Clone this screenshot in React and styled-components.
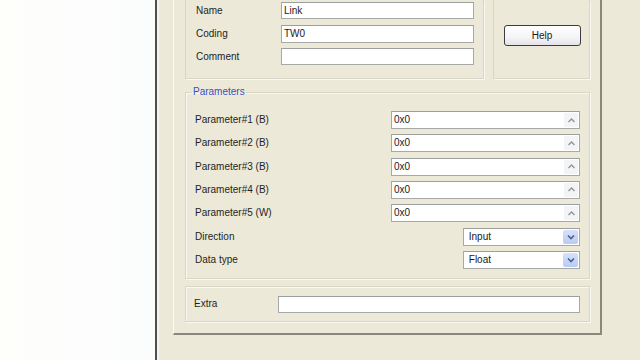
import React from "react";
import styled, { createGlobalStyle } from "styled-components";

const Global = createGlobalStyle`
  html, body { margin: 0; padding: 0; background: #fdfefb; }
  body { font-family: "Liberation Sans", Arial, sans-serif; font-size: 10px; color: #1e1e1e; }
  #root { width: 640px; height: 360px; overflow: hidden; }
`;

const Screen = styled.div`
  display: flex;
  width: 640px;
  height: 360px;
`;

const Desktop = styled.div`
  width: 155px;
  flex: none;
  background: linear-gradient(90deg, #fefefb 0%, #fbfdfd 100%);
`;

const Window = styled.div`
  flex: 1;
  background: #ece9d8;
  border-left: 2px solid #4e4e4e;
  box-shadow: inset 2px 0 0 #f4f3ee;
  padding-left: 16px;
  display: flex;
  align-items: flex-start;
`;

const Panel = styled.div`
  width: 429px;
  height: 335px;
  box-sizing: border-box;
  border-left: 1px solid #fbfaf4;
  border-right: 2px solid #8a877c;
  border-bottom: 2px solid #8a877c;
  padding: 0 10px 0 11px;
  display: flex;
  flex-direction: column;
`;

const TopRow = styled.div`
  display: flex;
  gap: 9px;
  height: 79px;
  flex: none;
`;

const Box = styled.div`
  box-sizing: border-box;
  width: ${(p) => p.$w}px;
  border: 1px solid #d9d5c7;
  border-top: none;
  box-shadow: 1px 1px 0 #f9f8f2;
  padding: ${(p) => p.$pad || "0"};
  display: flex;
  flex-direction: column;
  gap: ${(p) => p.$gap || 0}px;
`;

const Field = styled.div`
  display: grid;
  grid-template-columns: ${(p) => p.$label}px 1fr;
  align-items: center;
  height: ${(p) => p.$h || 18}px;
`;

const Label = styled.span`
  white-space: nowrap;
  line-height: 12px;
`;

const Input = styled.div`
  box-sizing: border-box;
  height: ${(p) => p.$h || 18}px;
  width: ${(p) => (p.$w ? p.$w + "px" : "auto")};
  justify-self: ${(p) => (p.$w ? "end" : "stretch")};
  background: #ffffff;
  border: 1px solid #a6a9a8;
  border-top-color: #9c9f9f;
  display: flex;
  align-items: center;
  padding-left: 2px;
  line-height: 12px;
  color: #1a1a1a;
`;

const Value = styled.span`
  flex: 1;
`;

const Spin = styled.div`
  width: 14px;
  height: 14px;
  margin-right: 1px;
  background: #f3f4f6;
  display: flex;
  align-items: center;
  justify-content: center;
`;

const DropBtn = styled.div`
  width: 15px;
  height: 14px;
  margin-right: 1px;
  border-radius: 2px;
  background: linear-gradient(180deg, #d6e1fb 0%, #b9cbf3 100%);
  display: flex;
  align-items: center;
  justify-content: center;
`;

const HelpCol = styled.div`
  display: flex;
  justify-content: center;
  padding-top: 25px;
`;

const Button = styled.div`
  box-sizing: border-box;
  width: 77px;
  height: 21px;
  border: 1px solid #3c3c40;
  border-radius: 3px;
  background: linear-gradient(180deg, #ffffff 0%, #f4f4f6 60%, #e4e3ea 100%);
  display: flex;
  align-items: center;
  justify-content: center;
  font-size: 10px;
  color: #1a1a1a;
  margin-left: 1px;
`;

const Group = styled.fieldset`
  margin: ${(p) => p.$mt}px 0 0 0;
  padding: ${(p) => p.$pad};
  border: 1px solid #d9d5c7;
  box-shadow: 1px 1px 0 #f9f8f2, inset 1px 1px 0 #f9f8f2;
  min-width: 0;
  display: flex;
  flex-direction: column;
  gap: ${(p) => p.$gap || 0}px;
`;

const Legend = styled.legend`
  padding: 0 1px;
  margin-left: -3px;
  color: #3450c8;
  font-size: 10px;
  line-height: 12px;
`;

const ChevUp = () => (
  <svg width="7" height="5" viewBox="0 0 7 5">
    <path d="M0.5 4 L3.5 1 L6.5 4" fill="none" stroke="#8f949c" strokeWidth="1.4" />
  </svg>
);

const ChevDown = () => (
  <svg width="8" height="6" viewBox="0 0 8 6">
    <path d="M1 1.5 L4 4.5 L7 1.5" fill="none" stroke="#4d6185" strokeWidth="1.6" />
  </svg>
);

const params = [
  "Parameter#1 (B)",
  "Parameter#2 (B)",
  "Parameter#3 (B)",
  "Parameter#4 (B)",
  "Parameter#5 (W)",
];

export default function App() {
  return (
    <>
      <Global />
      <Screen>
        <Desktop />
        <Window>
          <Panel>
            <TopRow>
              <Box $w={300} $pad="2px 9px 0 10px" $gap={5.5}>
                <Field $label={85} $h={17}>
                  <Label>Name</Label>
                  <Input $h={17}><Value>Link</Value></Input>
                </Field>
                <Field $label={85} $h={18}>
                  <Label>Coding</Label>
                  <Input $h={18}><Value>TW0</Value></Input>
                </Field>
                <Field $label={85} $h={17}>
                  <Label>Comment</Label>
                  <Input $h={17} />
                </Field>
              </Box>
              <Box $w={97}>
                <HelpCol>
                  <Button>Help</Button>
                </HelpCol>
              </Box>
            </TopRow>
            <Group $mt={7} $pad="13px 9px 9px 9px" $gap={5.33}>
              <Legend>Parameters</Legend>
              {params.map((p) => (
                <Field key={p} $label={196}>
                  <Label>{p}</Label>
                  <Input>
                    <Value>0x0</Value>
                    <Spin><ChevUp /></Spin>
                  </Input>
                </Field>
              ))}
              <Field $label={196}>
                <Label>Direction</Label>
                <Input $w={117}>
                  <Value>&nbsp;Input</Value>
                  <DropBtn><ChevDown /></DropBtn>
                </Input>
              </Field>
              <Field $label={196}>
                <Label>Data type</Label>
                <Input $w={117}>
                  <Value>&nbsp;Float</Value>
                  <DropBtn><ChevDown /></DropBtn>
                </Input>
              </Field>
            </Group>
            <Group $mt={7} $pad="9px 9px 8px 8px">
              <Field $label={84} $h={17}>
                <Label>Extra</Label>
                <Input $h={17} />
              </Field>
            </Group>
          </Panel>
        </Window>
      </Screen>
    </>
  );
}
